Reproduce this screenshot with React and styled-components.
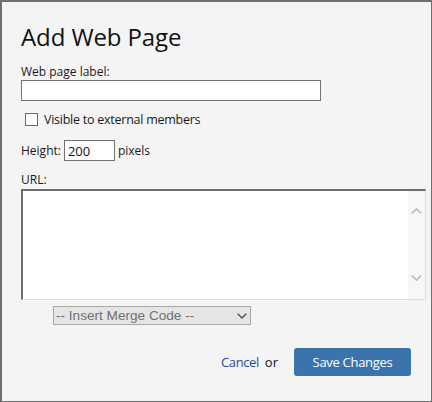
import React from "react";
import styled, { createGlobalStyle } from "styled-components";

const Global = createGlobalStyle`
  html, body { margin: 0; padding: 0; background: #f4f4f4; }
  body { font-family: "Open Sans", "Noto Sans", sans-serif; color: #1a1a1a; }
  * { box-sizing: border-box; }
`;

const Dialog = styled.div`
  width: 432px;
  height: 402px;
  background: #f4f4f4;
  border-style: solid;
  border-color: #6f6f6f;
  border-width: 2px 1px 1px 2px;
  padding: 21px 5px 0 19px;
  display: flex;
  flex-direction: column;
`;

const Title = styled.h1`
  margin: 0;
  font-size: 24px;
  line-height: 28px;
  font-weight: 400;
  color: #111;
  letter-spacing: -0.1px;
`;

const Label = styled.div`
  font-size: 12px;
  line-height: 15px;
  margin-top: ${(p) => p.$mt || 0}px;
  letter-spacing: 0;
`;

const TextInput = styled.input`
  display: block;
  width: ${(p) => p.$w}px;
  height: 21px;
  margin: ${(p) => p.$mt || 0}px 0 0 0;
  padding: 0 3px;
  border: 1px solid #727272;
  background: #fff;
  font-family: "Open Sans", sans-serif;
  font-size: 13px;
  color: #111;
  outline: none;
`;

const Row = styled.div`
  display: flex;
  align-items: center;
  margin-top: ${(p) => p.$mt || 0}px;
  margin-left: ${(p) => p.$ml || 0}px;
  gap: ${(p) => p.$gap || 0}px;
  font-size: 12px;
`;

const Check = styled.span`
  width: 13px;
  height: 13px;
  border: 1px solid #6a6a6a;
  background: #fff;
  display: inline-block;
`;

const CheckLabel = styled.span`
  font-size: 12.5px;
  letter-spacing: -0.25px;
`;

const Area = styled.div`
  display: flex;
  width: 405px;
  height: 111px;
  margin-top: 2px;
  background: #fff;
  border-style: solid;
  border-color: #6e6e6e #dcdcdc #dcdcdc #6e6e6e;
  border-width: 2px 1px 1px 2px;
`;

const AreaText = styled.textarea`
  flex: 1;
  border: none;
  resize: none;
  outline: none;
  margin: 0;
  padding: 2px;
  background: #fff;
  overflow: hidden;
`;

const ScrollBar = styled.div`
  width: 17px;
  background: #f7f7f7;
  display: flex;
  flex-direction: column;
  justify-content: space-between;
  align-items: center;
  padding: 17px 0 18px;
`;

const MergeSelect = styled.div`
  display: flex;
  align-items: center;
  justify-content: space-between;
  width: 198px;
  height: 19px;
  margin: 6px 0 0 32px;
  padding: 0 3px 0 2px;
  background: #e5e5e5;
  border: 1px solid #a8a8a8;
  font-family: "Liberation Sans", Arial, sans-serif;
  font-size: 13.6px;
  color: #707070;
`;

const Actions = styled.div`
  display: flex;
  justify-content: flex-end;
  align-items: center;
  margin: 23px 15px 0 0;
  font-size: 13px;
`;

const CancelLink = styled.a`
  color: #1f4c94;
  text-decoration: none;
  letter-spacing: -0.4px;
`;

const Or = styled.span`
  margin: 0 16px 0 6px;
  color: #111;
`;

const SaveButton = styled.button`
  width: 117px;
  height: 28px;
  border: none;
  border-radius: 3px;
  background: #3b74ac;
  color: #fff;
  font-family: "Open Sans", sans-serif;
  font-size: 13px;
  letter-spacing: -0.3px;
  padding: 0;
`;

const Chevron = ({ up, color, w = 11, h = 6, sw = 1.8 }) => (
  <svg width={w} height={h} viewBox="0 0 11 6">
    <polyline
      points={up ? "0.8,5.5 5.5,0.9 10.2,5.5" : "0.8,0.5 5.5,5.1 10.2,0.5"}
      fill="none"
      stroke={color}
      strokeWidth={sw}
    />
  </svg>
);

export default function App() {
  return (
    <>
      <Global />
      <Dialog>
        <Title>Add Web Page</Title>
        <Label $mt={13}>Web page label:</Label>
        <TextInput $w={300} $mt={1} />
        <Row $mt={10} $ml={4} $gap={6}>
          <Check />
          <CheckLabel>Visible to external members</CheckLabel>
        </Row>
        <Row $mt={12} $gap={3}>
          <span>Height:</span>
          <TextInput $w={51} defaultValue="200" />
          <span>pixels</span>
        </Row>
        <Label $mt={11}>URL:</Label>
        <Area>
          <AreaText />
          <ScrollBar>
            <Chevron up color="#c2c2c2" />
            <Chevron color="#c2c2c2" />
          </ScrollBar>
        </Area>
        <MergeSelect>
          <span>-- Insert Merge Code --</span>
          <Chevron color="#555" w={10} h={6} sw={1.6} />
        </MergeSelect>
        <Actions>
          <CancelLink href="#">Cancel</CancelLink>
          <Or>or</Or>
          <SaveButton>Save Changes</SaveButton>
        </Actions>
      </Dialog>
    </>
  );
}
